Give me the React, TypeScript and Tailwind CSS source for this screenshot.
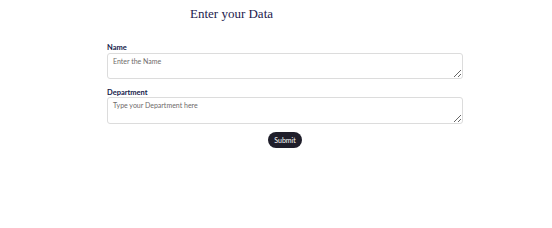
import React from "react";

export default function App() {
  return (
    <div className="w-[552px] h-[228px] bg-white" style={{ fontFamily: "Lato, 'Noto Sans', sans-serif" }}>
      <div className="pt-[6px] pl-[190px]">
        <h1 className="text-[13px] leading-[16px] text-[#1c1a4d]" style={{ fontFamily: "'Liberation Serif', serif" }}>
          Enter your Data
        </h1>
      </div>
      <form className="ml-[107px] w-[356px] mt-[21px] flex flex-col">
        <label className="text-[7.5px] font-bold text-[#14204a] leading-[9px]">Name</label>
        <textarea
          placeholder="Enter the Name"
          className="mt-[1px] h-[26px] w-full rounded-[3px] border border-[#dcdcdc] px-[5px] py-[3px] text-[7px] leading-[9px] placeholder:text-[#6e6a6a] outline-none"
        />
        <label className="mt-[9px] text-[7.5px] font-bold text-[#14204a] leading-[9px]">Department</label>
        <textarea
          placeholder="Type your Department here"
          className="h-[27px] w-full rounded-[3px] border border-[#dcdcdc] px-[5px] py-[3px] text-[7px] leading-[9px] placeholder:text-[#6e6a6a] outline-none"
        />
        <div className="flex justify-center mt-[8px]">
          <button type="button" className="h-[16px] px-[6px] rounded-full bg-[#1f1e2a] text-white text-[7px] leading-[9px]">
            Submit
          </button>
        </div>
      </form>
    </div>
  );
}
